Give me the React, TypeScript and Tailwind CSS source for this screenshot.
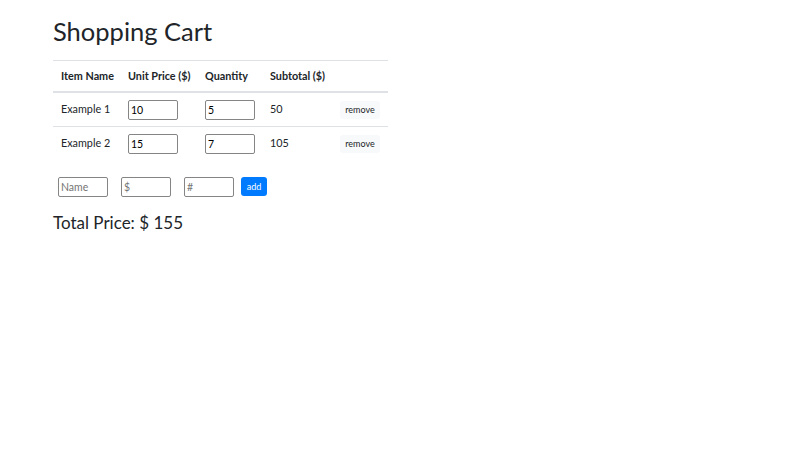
import React, { useState } from 'react';

type Item = { name: string; price: number; qty: number };

const inputCls =
  'w-[50px] h-[20px] border border-[#858585] rounded-[2px] px-[2px] text-[10.5px] text-black';

export default function App() {
  const [items, setItems] = useState<Item[]>([
    { name: 'Example 1', price: 10, qty: 5 },
    { name: 'Example 2', price: 15, qty: 7 },
  ]);
  const [name, setName] = useState('');
  const [price, setPrice] = useState('');
  const [qty, setQty] = useState('');

  const total = items.reduce((sum, it) => sum + it.price * it.qty, 0);

  const update = (i: number, patch: Partial<Item>) =>
    setItems(items.map((it, j) => (j === i ? { ...it, ...patch } : it)));

  const add = () => {
    if (!name) return;
    setItems([...items, { name, price: Number(price) || 0, qty: Number(qty) || 0 }]);
    setName('');
    setPrice('');
    setQty('');
  };

  return (
    <div className="min-h-[450px] bg-white pl-[53px] pt-[14px] text-[#212529] font-['Lato','Open_Sans',sans-serif]">
      <h3 className="text-[25.5px] leading-[34px] font-normal mb-[12px]">Shopping Cart</h3>

      <table className="w-[335px] table-fixed border-collapse text-[10.8px] text-left whitespace-nowrap">
        <thead>
          <tr className="border-t border-[#dee2e6] border-b-2 h-[31px]">
            <th className="w-[67px] px-2 font-bold align-middle">Item Name</th>
            <th className="w-[77px] px-2 font-bold align-middle">Unit Price ($)</th>
            <th className="w-[65px] px-2 font-bold align-middle">Quantity</th>
            <th className="w-[70px] px-2 font-bold align-middle">Subtotal ($)</th>
            <th className="px-2"></th>
          </tr>
        </thead>
        <tbody>
          {items.map((it, i) => (
            <tr key={i} className={i === 0 ? 'h-[35px]' : 'h-[35px] border-t border-[#dee2e6]'}>
              <td className="px-2 align-top pt-[8px]">{it.name}</td>
              <td className="px-2 align-top pt-[7px]">
                <input
                  className={inputCls}
                  value={it.price}
                  onChange={(e) => update(i, { price: Number(e.target.value) || 0 })}
                />
              </td>
              <td className="px-2 align-top pt-[7px]">
                <input
                  className={inputCls}
                  value={it.qty}
                  onChange={(e) => update(i, { qty: Number(e.target.value) || 0 })}
                />
              </td>
              <td className="px-2 align-top pt-[8px]">{it.price * it.qty}</td>
              <td className="px-2 align-top pt-[8px]">
                <button
                  className="bg-[#f8f9fa] rounded-[3px] w-[40px] h-[18px] text-[9px] text-[#212529]"
                  onClick={() => setItems(items.filter((_, j) => j !== i))}
                >
                  remove
                </button>
              </td>
            </tr>
          ))}
        </tbody>
      </table>

      <div className="flex items-center mt-[15px] ml-[5px] gap-[13px]">
        <input
          className={inputCls + ' placeholder:text-[#757575]'}
          placeholder="Name"
          value={name}
          onChange={(e) => setName(e.target.value)}
        />
        <input
          className={inputCls + ' placeholder:text-[#757575]'}
          placeholder="$"
          value={price}
          onChange={(e) => setPrice(e.target.value)}
        />
        <input
          className={inputCls + ' placeholder:text-[#757575]'}
          placeholder="#"
          value={qty}
          onChange={(e) => setQty(e.target.value)}
        />
        <button
          className="-ml-[6px] bg-[#007bff] text-white rounded-[3px] w-[26px] h-[19px] text-[9px]"
          onClick={add}
        >
          add
        </button>
      </div>

      <h4 className="text-[17px] leading-[24px] mt-[14px]">Total Price: $ {total}</h4>
    </div>
  );
}
